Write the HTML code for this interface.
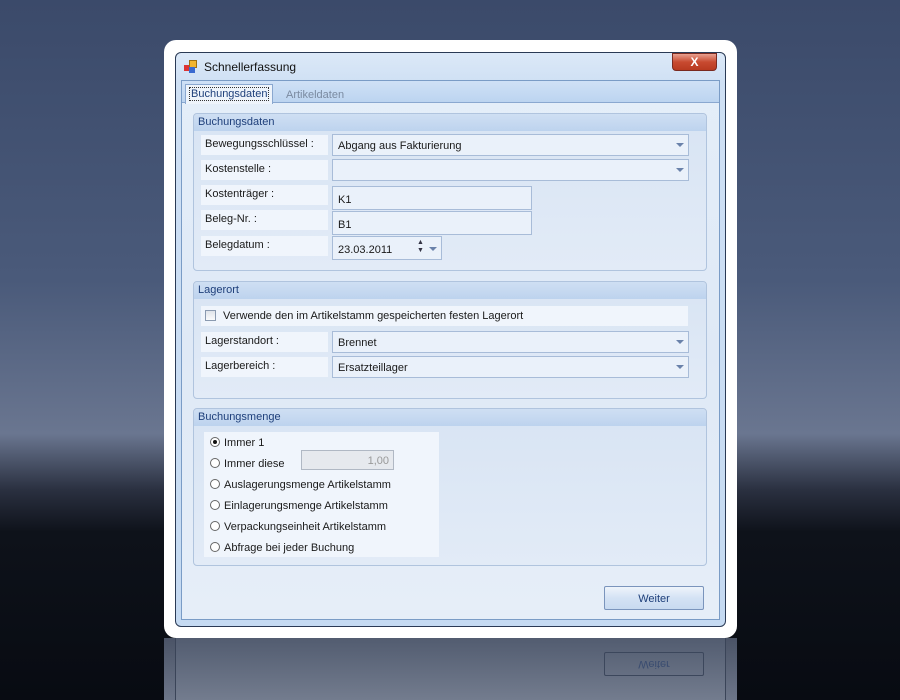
<!DOCTYPE html>
<html><head><meta charset="utf-8"><style>
*{margin:0;padding:0;box-sizing:border-box}
body{width:900px;height:700px;overflow:hidden;position:relative;font-family:"Liberation Sans",sans-serif;font-size:11px;color:#1a1a1a;
background:linear-gradient(to bottom,#3b4a6a 0%,#4a5a7a 40%,#6a7690 62%,#2a3040 70%,#0e121a 76%,#080b12 100%);}
.a{position:absolute}
.card{left:164px;top:40px;width:573px;height:598px;background:#fff;border-radius:12px}
.win{left:175px;top:52px;width:551px;height:575px;border:1px solid #2a3a55;border-radius:6px;background:linear-gradient(#dce9f8,#cfe0f4 30px,#c5daf2);}
.tabp{left:181px;top:80px;width:539px;height:540px;border:1px solid #7a9cc6;background:linear-gradient(#e4eef9,#dfe9f6 50%,#e6eef8);}
.tabstrip{left:182px;top:81px;width:537px;height:22px;background:linear-gradient(#cfe1f6,#bcd4f0);border-bottom:1px solid #8aa8d0}
.tab1{left:185px;top:84px;width:88px;height:20px;background:#eef4fb;border:1px solid #8aa8d0;border-bottom:none}
.grp{left:193px;width:514px;border:1px solid #b0c4de;border-radius:4px;background:linear-gradient(#d8e4f3,#e2ebf7)}
.gh{position:absolute;left:0;top:0;right:0;height:17px;background:linear-gradient(#cfdff3,#bdd3ee);border-radius:4px 4px 0 0;color:#1e3f7a;font-size:11px;padding:2px 0 0 4px}
.lbl{position:absolute;background:#f0f5fc;width:127px;height:20px;padding:3px 4px;font-size:11px}
.inp{position:absolute;background:#eaf1fa;border:1px solid #a8bcd8;height:22px;padding:5px 5px;font-size:11px}
.arr{position:absolute;right:4px;top:8px;width:0;height:0;border-left:4px solid transparent;border-right:4px solid transparent;border-top:4px solid #6a82aa}
.rad{position:absolute;left:210px;font-size:11px}
.rad i{display:inline-block;width:10px;height:10px;border:1px solid #666;border-radius:50%;background:#fff;vertical-align:-1px;margin-right:4px;position:relative}
</style></head><body>
<div class="a" style="left:164px;top:638px;width:573px;height:62px;background:linear-gradient(#4a5366,#6d7689)"></div>
<div class="a" style="left:175px;top:638px;width:551px;height:62px;border-left:1px solid #3a4458;border-right:1px solid #3a4458;background:linear-gradient(#525c70,#737c8e)"></div>
<div class="a" style="left:604px;top:652px;width:100px;height:24px;border:1px solid #3c475c;border-radius:2px;color:#3a4c70;text-align:center;padding-top:5px;transform:scaleY(-1)">Weiter</div>
<div class="a card"></div>
<div class="a win"></div>
<div class="a" style="left:184px;top:60px;width:13px;height:13px">
<div class="a" style="left:0;top:5px;width:6px;height:6px;background:#d33"></div>
<div class="a" style="left:5px;top:0;width:8px;height:8px;background:#f2b530;border:1px solid #a07010"></div>
<div class="a" style="left:5px;top:7px;width:6px;height:6px;background:#3a6ad0"></div></div>
<div class="a" style="left:204px;top:60px;font-size:12px;color:#111">Schnellerfassung</div>
<div class="a" style="left:672px;top:53px;width:45px;height:18px;border:1px solid #7a2a20;border-radius:0 0 4px 4px;background:linear-gradient(#e8a090,#c84a30 50%,#b83a20);color:#fff;font-weight:bold;text-align:center;font-size:12px;line-height:16px">X</div>
<div class="a tabp"></div>
<div class="a tabstrip"></div>
<div class="a tab1"></div>
<div class="a" style="left:189px;top:87px;color:#1e3f7a;border:1px dotted #333;padding:0 1px;font-size:11px">Buchungsdaten</div>
<div class="a" style="left:286px;top:89px;color:#7a8aa0;font-size:11px">Artikeldaten</div>

<div class="a grp" style="top:113px;height:158px"><div class="gh">Buchungsdaten</div></div>
<div class="lbl" style="left:201px;top:135px">Bewegungsschlüssel :</div>
<div class="inp" style="left:332px;top:134px;width:357px;padding-top:5px">Abgang aus Fakturierung<span class="arr"></span></div>
<div class="lbl" style="left:201px;top:160px">Kostenstelle :</div>
<div class="inp" style="left:332px;top:159px;width:357px"><span class="arr"></span></div>
<div class="lbl" style="left:201px;top:185px">Kostenträger :</div>
<div class="inp" style="left:332px;top:186px;width:200px;height:24px;padding-top:7px">K1</div>
<div class="lbl" style="left:201px;top:210px">Beleg-Nr. :</div>
<div class="inp" style="left:332px;top:211px;width:200px;height:24px;padding-top:7px">B1</div>
<div class="lbl" style="left:201px;top:236px">Belegdatum :</div>
<div class="inp" style="left:332px;top:236px;width:110px;height:24px;padding-top:7px">23.03.2011<span style="position:absolute;left:84px;top:2px;font-size:7px;line-height:8px;color:#334">▲<br>▼</span><span class="arr" style="top:10px"></span></div>

<div class="a grp" style="top:281px;height:118px"><div class="gh">Lagerort</div></div>
<div class="a" style="left:201px;top:306px;width:487px;height:20px;background:#f0f5fc"></div>
<div class="a" style="left:205px;top:310px;width:11px;height:11px;border:1px solid #8a9ab0;background:linear-gradient(#e0e4ea,#fafbfc)"></div>
<div class="a" style="left:223px;top:310px;font-size:11px">Verwende den im Artikelstamm gespeicherten festen Lagerort</div>
<div class="lbl" style="left:201px;top:332px">Lagerstandort :</div>
<div class="inp" style="left:332px;top:331px;width:357px">Brennet<span class="arr"></span></div>
<div class="lbl" style="left:201px;top:357px">Lagerbereich :</div>
<div class="inp" style="left:332px;top:356px;width:357px">Ersatzteillager<span class="arr"></span></div>

<div class="a grp" style="top:408px;height:158px"><div class="gh">Buchungsmenge</div></div>
<div class="a" style="left:204px;top:432px;width:235px;height:125px;background:#f0f5fc"></div>
<div class="rad" style="top:437px"><i><b style="position:absolute;left:2px;top:2px;width:4px;height:4px;border-radius:50%;background:#111"></b></i>Immer 1</div>
<div class="rad" style="top:458px"><i></i>Immer diese</div>
<div class="a" style="left:301px;top:450px;width:93px;height:20px;border:1px solid #b0b8c4;background:#e6e9ee;color:#999;text-align:right;padding:4px 4px">1,00</div>
<div class="rad" style="top:479px"><i></i>Auslagerungsmenge Artikelstamm</div>
<div class="rad" style="top:500px"><i></i>Einlagerungsmenge Artikelstamm</div>
<div class="rad" style="top:521px"><i></i>Verpackungseinheit Artikelstamm</div>
<div class="rad" style="top:542px"><i></i>Abfrage bei jeder Buchung</div>

<div class="a" style="left:604px;top:586px;width:100px;height:24px;border:1px solid #7a94bc;border-radius:2px;background:linear-gradient(#eef4fb,#d4e2f4 50%,#c8daf0);color:#1e3f7a;text-align:center;padding-top:6px;font-size:11px">Weiter</div>
</body></html>
